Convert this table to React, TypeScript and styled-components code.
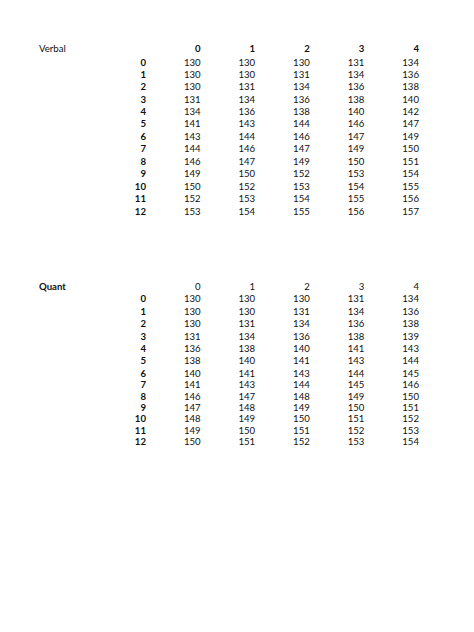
import styled, { createGlobalStyle } from "styled-components";

const GlobalStyle = createGlobalStyle`
  html, body {
    margin: 0;
    padding: 0;
    background: #ffffff;
  }
  body {
    font-family: Lato, "Open Sans", "Liberation Sans", sans-serif;
    color: #111111;
  }
`;

const Sheet = styled.div`
  width: 474px;
  height: 632px;
  padding-top: 43px;
  padding-left: 36px;
  box-sizing: border-box;
`;

const Block = styled.div<{ $gap: number }>`
  display: flex;
  flex-direction: column;
  margin-bottom: ${(p) => p.$gap}px;
`;

const Row = styled.div<{ $h: number }>`
  display: grid;
  grid-template-columns: 112px repeat(5, 54.6px);
  height: ${(p) => p.$h}px;
  line-height: ${(p) => p.$h}px;
  font-size: 9.6px;
`;

const Cell = styled.div<{ $bold?: boolean; $left?: boolean }>`
  text-align: ${(p) => (p.$left ? "left" : "right")};
  padding: ${(p) => (p.$left ? "0 0 0 3px" : "0 2px 0 0")};
  font-weight: ${(p) => (p.$bold ? 700 : 400)};
  white-space: nowrap;
`;

type Table = {
  title: string;
  titleBold: boolean;
  headBold: boolean;
  rows: number[][];
  heights: number[];
};

const verbal: Table = {
  title: "Verbal",
  titleBold: false,
  headBold: true,
  rows: [
    [130, 130, 130, 131, 134],
    [130, 130, 131, 134, 136],
    [130, 131, 134, 136, 138],
    [131, 134, 136, 138, 140],
    [134, 136, 138, 140, 142],
    [141, 143, 144, 146, 147],
    [143, 144, 146, 147, 149],
    [144, 146, 147, 149, 150],
    [146, 147, 149, 150, 151],
    [149, 150, 152, 153, 154],
    [150, 152, 153, 154, 155],
    [152, 153, 154, 155, 156],
    [153, 154, 155, 156, 157],
  ],
  heights: [13.2, 12.45, 12.45, 12.45, 12.45, 12.45, 12.45, 12.45, 12.45, 12.45, 12.45, 12.45, 12.45],
};

const quant: Table = {
  title: "Quant",
  titleBold: true,
  headBold: false,
  rows: [
    [130, 130, 130, 131, 134],
    [130, 130, 131, 134, 136],
    [130, 131, 134, 136, 138],
    [131, 134, 136, 138, 139],
    [136, 138, 140, 141, 143],
    [138, 140, 141, 143, 144],
    [140, 141, 143, 144, 145],
    [141, 143, 144, 145, 146],
    [146, 147, 148, 149, 150],
    [147, 148, 149, 150, 151],
    [148, 149, 150, 151, 152],
    [149, 150, 151, 152, 153],
    [150, 151, 152, 153, 154],
  ],
  heights: [12.4, 12.4, 12.4, 12.4, 12.4, 12.4, 11.4, 11.4, 11.4, 11.4, 11.4, 11.4, 11.4],
};

const ScoreTable = ({ table, gap }: { table: Table; gap: number }) => (
  <Block $gap={gap}>
    <Row $h={12.5}>
      <Cell $left $bold={table.titleBold}>
        {table.title}
      </Cell>
      {[0, 1, 2, 3, 4].map((c) => (
        <Cell key={c} $bold={table.headBold}>
          {c}
        </Cell>
      ))}
    </Row>
    {table.rows.map((r, i) => (
      <Row key={i} $h={table.heights[i]}>
        <Cell $bold>{i}</Cell>
        {r.map((v, j) => (
          <Cell key={j}>{v}</Cell>
        ))}
      </Row>
    ))}
  </Block>
);

export default function App() {
  return (
    <>
      <GlobalStyle />
      <Sheet>
        <ScoreTable table={verbal} gap={63} />
        <ScoreTable table={quant} gap={0} />
      </Sheet>
    </>
  );
}
